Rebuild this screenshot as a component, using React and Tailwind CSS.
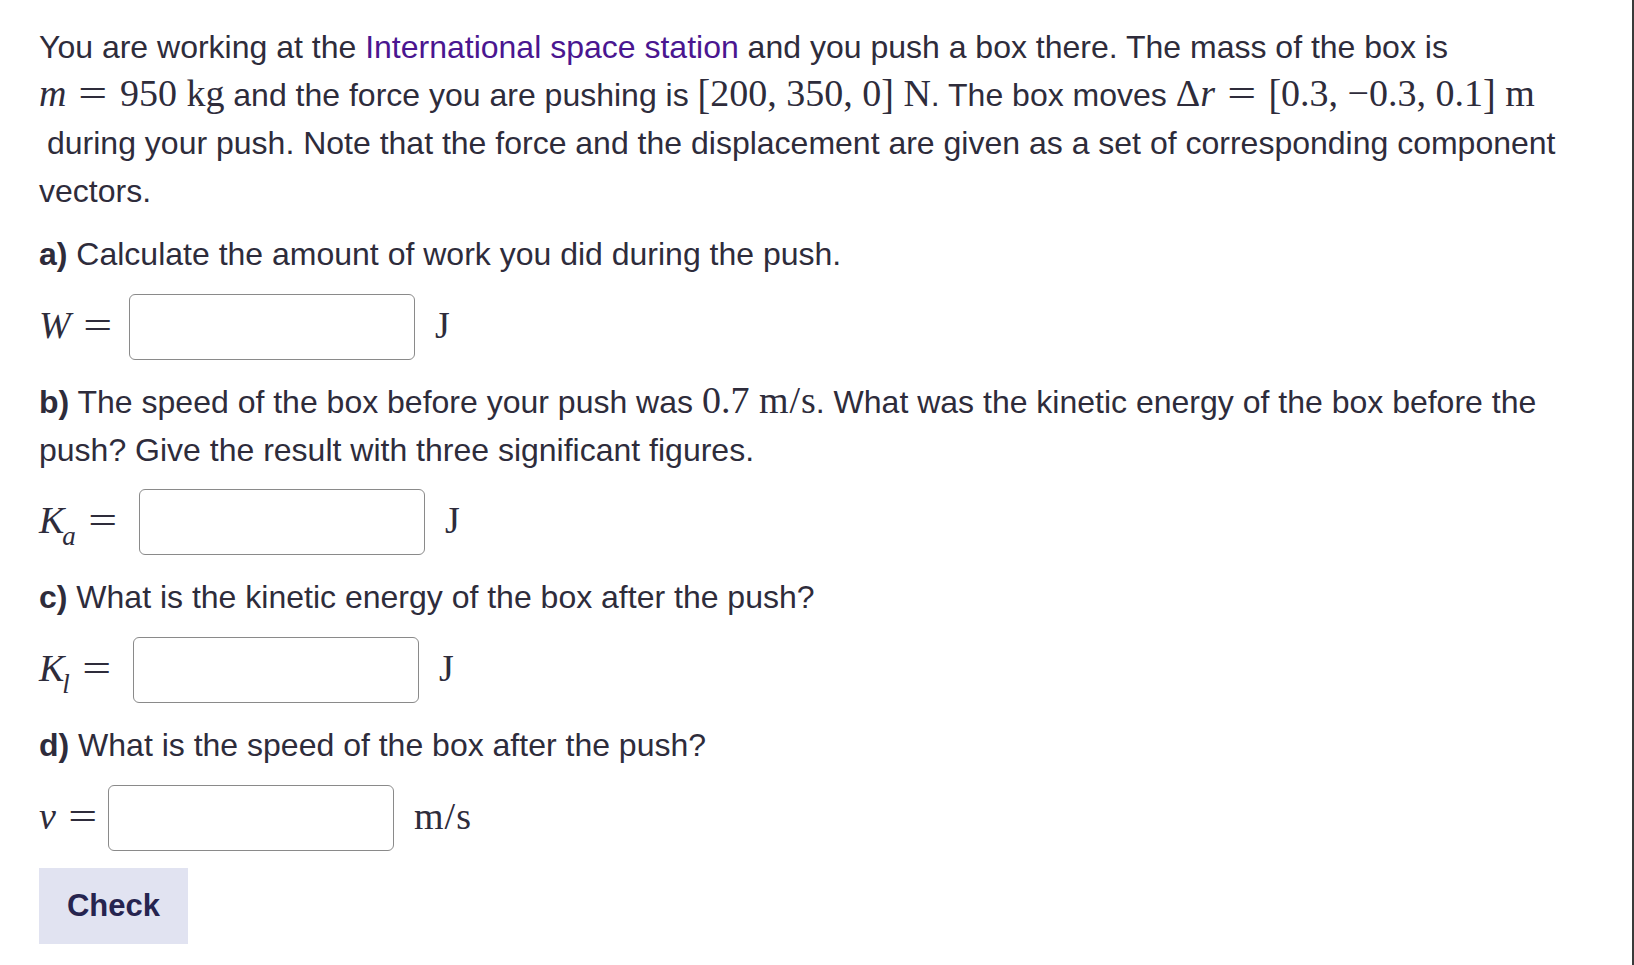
import React from 'react';

// inline math in a serif face, roughly like KaTeX output
const M = ({ children }) => (
    <span className="font-['Liberation_Serif',serif] text-[38px] leading-none">{children}</span>
);

const Eq = () => <span className="inline-block mx-[16px] scale-x-[1.35]">=</span>;

const Br = ({ children }) => (
    <span className="inline-block scale-y-[1.12]">{children}</span>
);

const Sub = ({ children }) => (
    <sub className="text-[27px] align-[-5px] ml-[-2px]"><i>{children}</i></sub>
);

const AnswerRow = ({ label, labelWidth, unit, className }) => (
    <div className={`flex items-center ${className}`}>
        <div className={`${labelWidth} shrink-0 whitespace-nowrap`}>{label}</div>
        <input
            type="text"
            className="w-[286px] h-[66px] border-[1.5px] border-[#8a8a8a] rounded-[6px] bg-white outline-none"
        />
        <span className="ml-[20px]">{unit}</span>
    </div>
);

const App = () => {
    return (
        <div className="min-h-screen w-full bg-white border-r-2 border-[#3a3a3a] font-['Liberation_Sans',Arial,sans-serif] text-[32px] leading-[48px] text-[#2e2c3b]">
            <div className="pl-[39px] pt-[23px] pb-[20px]">
                <p className="whitespace-nowrap">
                    You are working at the <a href="#" className="text-[#4a1690]">International space station</a> and you push a box there. The mass of the box is
                    <br />
                    <M><i>m</i><Eq />950 kg</M> and the force you are pushing is <M><Br>[</Br>200, 350, 0<Br>]</Br> N</M>. The box moves <M>Δ<i>r</i><Eq /><Br>[</Br>0.3, −0.3, 0.1<Br>]</Br> m</M>
                    <br />
                    <span className="pl-[8px]">during your push. Note that the force and the displacement are given as a set of corresponding component</span>
                    <br />
                    vectors.
                </p>

                <p className="mt-[15px]"><b>a)</b> Calculate the amount of work you did during the push.</p>
                <AnswerRow
                    className="mt-[16px]"
                    labelWidth="w-[90px]"
                    label={<M><i>W</i><Eq /></M>}
                    unit={<M>J</M>}
                />

                <p className="mt-[18px] whitespace-nowrap">
                    <b>b)</b> The speed of the box before your push was <M>0.7 m<span className="mx-[1px]">/</span>s</M>. What was the kinetic energy of the box before the
                    <br />
                    push? Give the result with three significant figures.
                </p>
                <AnswerRow
                    className="mt-[15px]"
                    labelWidth="w-[100px]"
                    label={<M><i>K</i><Sub>a</Sub><Eq /></M>}
                    unit={<M>J</M>}
                />

                <p className="mt-[18px]"><b>c)</b> What is the kinetic energy of the box after the push?</p>
                <AnswerRow
                    className="mt-[16px]"
                    labelWidth="w-[94px]"
                    label={<M><i>K</i><Sub>l</Sub><Eq /></M>}
                    unit={<M>J</M>}
                />

                <p className="mt-[18px]"><b>d)</b> What is the speed of the box after the push?</p>
                <AnswerRow
                    className="mt-[16px]"
                    labelWidth="w-[69px]"
                    label={<M><i>v</i><Eq /></M>}
                    unit={<M>m<span className="mx-[1px]">/</span>s</M>}
                />

                <button className="mt-[17px] w-[149px] h-[76px] bg-[#e1e3f1] text-[#26244f] font-bold text-[31px]">
                    Check
                </button>
            </div>
        </div>
    );
};

export default App;
